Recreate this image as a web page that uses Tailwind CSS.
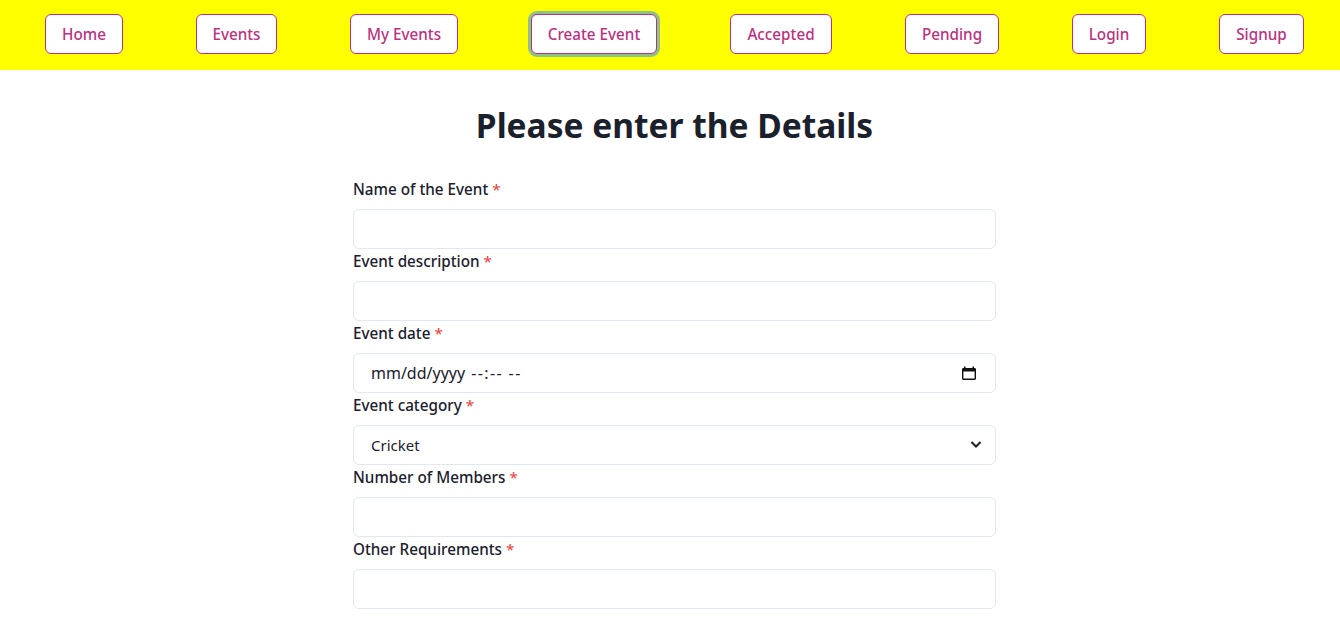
<!DOCTYPE html>
<html lang="en">
<head>
<meta charset="utf-8">
<title>Create Event</title>
<script src="https://cdn.jsdelivr.net/npm/@tailwindcss/browser@4"></script>
</head>
<body class="bg-white font-['Noto_Sans',sans-serif] overflow-hidden">
<nav class="h-[70px] bg-[#ffff00] flex items-start gap-[73px] pl-[45px] pt-[14px]">
  <a class="h-10 w-[78px] flex items-center justify-center bg-white border border-[#b83280] rounded-md text-[15.25px] font-medium text-[#b83280]">Home</a>
  <a class="h-10 w-[81px] flex items-center justify-center bg-white border border-[#b83280] rounded-md text-[15.25px] font-medium text-[#b83280]">Events</a>
  <a class="h-10 w-[108px] flex items-center justify-center bg-white border border-[#b83280] rounded-md text-[15.25px] font-medium text-[#b83280]">My Events</a>
  <a class="h-10 w-[126px] flex items-center justify-center bg-white border border-[#b83280] rounded-md text-[15.25px] font-medium text-[#b83280] ring-[3px] ring-[#4299e1]/60">Create Event</a>
  <a class="h-10 w-[102px] flex items-center justify-center bg-white border border-[#b83280] rounded-md text-[15.25px] font-medium text-[#b83280]">Accepted</a>
  <a class="h-10 w-[94px] flex items-center justify-center bg-white border border-[#b83280] rounded-md text-[15.25px] font-medium text-[#b83280]">Pending</a>
  <a class="h-10 w-[74px] flex items-center justify-center bg-white border border-[#b83280] rounded-md text-[15.25px] font-medium text-[#b83280]">Login</a>
  <a class="h-10 w-[85px] flex items-center justify-center bg-white border border-[#b83280] rounded-md text-[15.25px] font-medium text-[#b83280]">Signup</a>
</nav>
<main class="w-[643px] ml-[353px]">
<h1 class="text-center text-[33.5px] leading-10 font-bold text-[#1a202c] mt-[35px] mb-[34px]">Please enter the Details</h1>
<form>
  <div>
    <label class="block mb-[10px] text-[15.25px] leading-5 font-medium text-[#1a202c]">Name of the Event <span class="text-[#e53e3e] font-normal">*</span></label>
    <input type="text" class="block w-full h-10 px-4 rounded-md border border-[#e2e8f0] bg-white text-[15px]">
  </div>
  <div class="mt-[2px]">
    <label class="block mb-[10px] text-[15.25px] leading-5 font-medium text-[#1a202c]">Event description <span class="text-[#e53e3e] font-normal">*</span></label>
    <input type="text" class="block w-full h-10 px-4 rounded-md border border-[#e2e8f0] bg-white text-[15px]">
  </div>
  <div class="mt-[2px]">
    <label class="block mb-[10px] text-[15.25px] leading-5 font-medium text-[#1a202c]">Event date <span class="text-[#e53e3e] font-normal">*</span></label>
    <div class="flex items-center w-full h-10 pl-[17px] pr-[18px] rounded-md border border-[#e2e8f0] bg-white text-[16px] text-[#1a202c]">
      <span>mm/dd/yyyy</span>
      <span class="ml-[6px] tracking-[1.4px]">--:-- --</span>
      <svg class="ml-auto w-4 h-4" viewBox="0 0 16 16" aria-hidden="true"><path fill="#111" d="M3 1.5h1.5V3h7V1.5H13V3h.6c.8 0 1.4.6 1.4 1.4v9.2c0 .8-.6 1.4-1.4 1.4H2.4C1.6 15 1 14.4 1 13.6V4.4C1 3.6 1.6 3 2.4 3H3zM2.4 6.5v7.1h11.2V6.5z"/></svg>
    </div>
  </div>
  <div class="mt-[2px]">
    <label class="block mb-[10px] text-[15.25px] leading-5 font-medium text-[#1a202c]">Event category <span class="text-[#e53e3e] font-normal">*</span></label>
    <div class="relative">
      <select class="appearance-none block w-full h-10 pl-[17px] pr-10 rounded-md border border-[#e2e8f0] bg-white text-[15px] text-[#1a202c]"><option>Cricket</option></select>
      <svg class="absolute left-[617px] top-[15px] w-[12px] h-[9px]" viewBox="0 0 12 9" fill="none" aria-hidden="true"><path d="M1.5 2l4.5 4.5L10.5 2" stroke="#222" stroke-width="2"/></svg>
    </div>
  </div>
  <div class="mt-[2px]">
    <label class="block mb-[10px] text-[15.25px] leading-5 font-medium text-[#1a202c]">Number of Members <span class="text-[#e53e3e] font-normal">*</span></label>
    <input type="number" class="block w-full h-10 px-4 rounded-md border border-[#e2e8f0] bg-white text-[15px]">
  </div>
  <div class="mt-[2px]">
    <label class="block mb-[10px] text-[15.25px] leading-5 font-medium text-[#1a202c]">Other Requirements <span class="text-[#e53e3e] font-normal">*</span></label>
    <input type="text" class="block w-full h-10 px-4 rounded-md border border-[#e2e8f0] bg-white text-[15px]">
  </div>
</form>
</main>
</body>
</html>
